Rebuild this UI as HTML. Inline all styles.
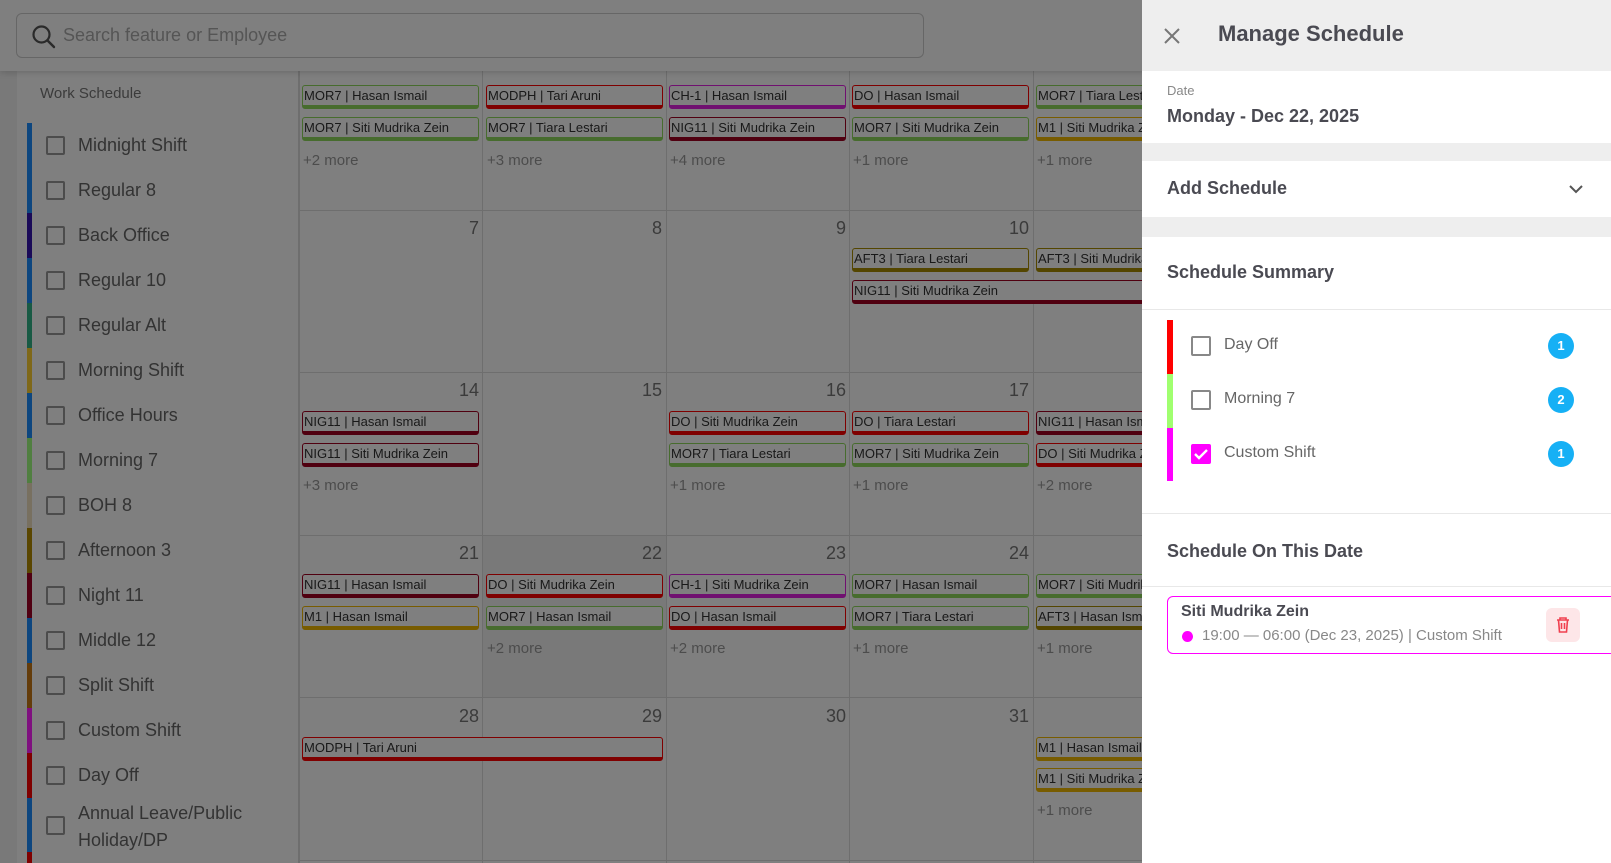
<!DOCTYPE html>
<html><head><meta charset="utf-8"><style>
*{box-sizing:border-box;margin:0;padding:0}
body{width:1611px;height:863px;overflow:hidden;position:relative;background:#f2f2f2;font-family:"Liberation Sans",sans-serif;color:#444}
.a{position:absolute}
.hdr{left:0;top:0;width:1611px;height:71px;background:#fff;box-shadow:0 2px 6px rgba(0,0,0,.15);z-index:2}
.search{left:16px;top:13px;width:908px;height:45px;border:1px solid #ccc;border-radius:6px;background:#fff}
.side{left:17px;top:71px;width:282px;height:792px;background:#fff;border-right:1px solid #ddd}
.bar{left:27px;width:5px;height:45px}
.cb{left:46px;width:19px;height:19px;border:2px solid #999;border-radius:2px}
.lb{left:78px;font-size:18px;color:#666}
.cal{left:300px;top:47px;width:1000px;height:816px;background:#fff}
.vl{width:1px;background:#ddd;top:47px;height:816px}
.hl{height:1px;background:#ddd;left:300px;width:1000px}
.dn{font-size:18px;color:#777;width:180px;text-align:right}
.c{position:absolute;height:24px;border:1px solid;border-bottom-width:4px;border-radius:3px;font-size:13px;line-height:19px;padding-left:1px;color:#333;white-space:nowrap;overflow:hidden;background:#fff}
.g{border-color:#8fd85c}.r{border-color:#ff0000}.n{border-color:#a00020}.m{border-color:#e020e0}.o{border-color:#a88c00}.y{border-color:#f0b800}
.more{font-size:15px;color:#999}
.ov{left:0;top:0;width:1142px;height:863px;background:rgba(0,0,0,.5);z-index:5}
.pn{left:1142px;top:0;width:469px;height:863px;background:#fff;z-index:6}
.sec{position:absolute;left:0;width:469px}
.badge{position:absolute;left:406px;width:26px;height:26px;border-radius:50%;background:#16b0f5;color:#fff;font-size:13px;font-weight:bold;text-align:center;line-height:26px}
</style></head><body>
<div class="a hdr"><div class="a search">
<svg class="a" style="left:14px;top:10px" width="26" height="26" viewBox="0 0 26 26"><circle cx="10.5" cy="10.5" r="8" fill="none" stroke="#555" stroke-width="2.2"/><line x1="16.5" y1="16.5" x2="23" y2="23" stroke="#555" stroke-width="2.4" stroke-linecap="round"/></svg>
<div class="a" style="left:46px;top:11px;font-size:18px;color:#aaa">Search feature or Employee</div></div></div>

<div class="a side"></div>
<div class="a" style="left:40px;top:85px;font-size:15px;color:#777">Work Schedule</div>
<div class="a bar" style="top:123px;background:#1a8cff"></div><div class="a cb" style="top:136px"></div><div class="a lb" style="top:135px">Midnight Shift</div>
<div class="a bar" style="top:168px;background:#1a8cff"></div><div class="a cb" style="top:181px"></div><div class="a lb" style="top:180px">Regular 8</div>
<div class="a bar" style="top:213px;background:#3414b0"></div><div class="a cb" style="top:226px"></div><div class="a lb" style="top:225px">Back Office</div>
<div class="a bar" style="top:258px;background:#1a8cff"></div><div class="a cb" style="top:271px"></div><div class="a lb" style="top:270px">Regular 10</div>
<div class="a bar" style="top:303px;background:#30b488"></div><div class="a cb" style="top:316px"></div><div class="a lb" style="top:315px">Regular Alt</div>
<div class="a bar" style="top:348px;background:#ffd030"></div><div class="a cb" style="top:361px"></div><div class="a lb" style="top:360px">Morning Shift</div>
<div class="a bar" style="top:393px;background:#1a8cff"></div><div class="a cb" style="top:406px"></div><div class="a lb" style="top:405px">Office Hours</div>
<div class="a bar" style="top:438px;background:#a0ff80"></div><div class="a cb" style="top:451px"></div><div class="a lb" style="top:450px">Morning 7</div>
<div class="a bar" style="top:483px;background:#f0e0c0"></div><div class="a cb" style="top:496px"></div><div class="a lb" style="top:495px">BOH 8</div>
<div class="a bar" style="top:528px;background:#b48c00"></div><div class="a cb" style="top:541px"></div><div class="a lb" style="top:540px">Afternoon 3</div>
<div class="a bar" style="top:573px;background:#a00024"></div><div class="a cb" style="top:586px"></div><div class="a lb" style="top:585px">Night 11</div>
<div class="a bar" style="top:618px;background:#1a8cff"></div><div class="a cb" style="top:631px"></div><div class="a lb" style="top:630px">Middle 12</div>
<div class="a bar" style="top:663px;background:#c87814"></div><div class="a cb" style="top:676px"></div><div class="a lb" style="top:675px">Split Shift</div>
<div class="a bar" style="top:708px;background:#ff20ff"></div><div class="a cb" style="top:721px"></div><div class="a lb" style="top:720px">Custom Shift</div>
<div class="a bar" style="top:753px;background:#ff0000"></div><div class="a cb" style="top:766px"></div><div class="a lb" style="top:765px">Day Off</div>
<div class="a bar" style="top:798px;height:54px;background:#1a8cff"></div><div class="a cb" style="top:816px"></div><div class="a lb" style="top:800px;line-height:27px">Annual Leave/Public<br>Holiday/DP</div>
<div class="a bar" style="top:852px;height:11px;background:#ff0000"></div>

<div class="a cal"></div>
<div class="a" style="left:483px;top:535px;width:183px;height:163px;background:#f3f3f3"></div>
<div class="a vl" style="left:299px"></div><div class="a vl" style="left:482px"></div><div class="a vl" style="left:666px"></div><div class="a vl" style="left:849px"></div><div class="a vl" style="left:1033px"></div>
<div class="a hl" style="top:210px"></div><div class="a hl" style="top:372px"></div><div class="a hl" style="top:535px"></div><div class="a hl" style="top:697px"></div><div class="a hl" style="top:860px"></div>

<div class="c g" style="left:302px;top:85px;width:177px">MOR7 | Hasan Ismail</div>
<div class="c g" style="left:302px;top:117px;width:177px">MOR7 | Siti Mudrika Zein</div>
<div class="a more" style="left:303px;top:152px">+2 more</div>
<div class="c r" style="left:486px;top:85px;width:177px">MODPH | Tari Aruni</div>
<div class="c g" style="left:486px;top:117px;width:177px">MOR7 | Tiara Lestari</div>
<div class="a more" style="left:487px;top:152px">+3 more</div>
<div class="c m" style="left:669px;top:85px;width:177px">CH-1 | Hasan Ismail</div>
<div class="c n" style="left:669px;top:117px;width:177px">NIG11 | Siti Mudrika Zein</div>
<div class="a more" style="left:670px;top:152px">+4 more</div>
<div class="c r" style="left:852px;top:85px;width:177px">DO | Hasan Ismail</div>
<div class="c g" style="left:852px;top:117px;width:177px">MOR7 | Siti Mudrika Zein</div>
<div class="a more" style="left:853px;top:152px">+1 more</div>
<div class="c g" style="left:1036px;top:85px;width:177px">MOR7 | Tiara Lestari</div>
<div class="c y" style="left:1036px;top:117px;width:177px">M1 | Siti Mudrika Zein</div>
<div class="a more" style="left:1037px;top:152px">+1 more</div>
<div class="a dn" style="left:299px;top:218px">7</div><div class="a dn" style="left:482px;top:218px">8</div><div class="a dn" style="left:666px;top:218px">9</div><div class="a dn" style="left:849px;top:218px">10</div>
<div class="c o" style="left:852px;top:248px;width:177px">AFT3 | Tiara Lestari</div>
<div class="c o" style="left:1036px;top:248px;width:177px">AFT3 | Siti Mudrika Zein</div>
<div class="c n" style="left:852px;top:280px;width:400px">NIG11 | Siti Mudrika Zein</div>
<div class="a dn" style="left:299px;top:380px">14</div><div class="a dn" style="left:482px;top:380px">15</div><div class="a dn" style="left:666px;top:380px">16</div><div class="a dn" style="left:849px;top:380px">17</div>
<div class="c n" style="left:302px;top:411px;width:177px">NIG11 | Hasan Ismail</div>
<div class="c n" style="left:302px;top:443px;width:177px">NIG11 | Siti Mudrika Zein</div>
<div class="a more" style="left:303px;top:477px">+3 more</div>
<div class="c r" style="left:669px;top:411px;width:177px">DO | Siti Mudrika Zein</div>
<div class="c g" style="left:669px;top:443px;width:177px">MOR7 | Tiara Lestari</div>
<div class="a more" style="left:670px;top:477px">+1 more</div>
<div class="c r" style="left:852px;top:411px;width:177px">DO | Tiara Lestari</div>
<div class="c g" style="left:852px;top:443px;width:177px">MOR7 | Siti Mudrika Zein</div>
<div class="a more" style="left:853px;top:477px">+1 more</div>
<div class="c n" style="left:1036px;top:411px;width:177px">NIG11 | Hasan Ismail</div>
<div class="c r" style="left:1036px;top:443px;width:177px">DO | Siti Mudrika Zein</div>
<div class="a more" style="left:1037px;top:477px">+2 more</div>
<div class="a dn" style="left:299px;top:543px">21</div><div class="a dn" style="left:482px;top:543px">22</div><div class="a dn" style="left:666px;top:543px">23</div><div class="a dn" style="left:849px;top:543px">24</div>
<div class="c n" style="left:302px;top:574px;width:177px">NIG11 | Hasan Ismail</div>
<div class="c y" style="left:302px;top:606px;width:177px">M1 | Hasan Ismail</div>
<div class="c r" style="left:486px;top:574px;width:177px">DO | Siti Mudrika Zein</div>
<div class="c g" style="left:486px;top:606px;width:177px">MOR7 | Hasan Ismail</div>
<div class="a more" style="left:487px;top:640px">+2 more</div>
<div class="c m" style="left:669px;top:574px;width:177px">CH-1 | Siti Mudrika Zein</div>
<div class="c r" style="left:669px;top:606px;width:177px">DO | Hasan Ismail</div>
<div class="a more" style="left:670px;top:640px">+2 more</div>
<div class="c g" style="left:852px;top:574px;width:177px">MOR7 | Hasan Ismail</div>
<div class="c g" style="left:852px;top:606px;width:177px">MOR7 | Tiara Lestari</div>
<div class="a more" style="left:853px;top:640px">+1 more</div>
<div class="c g" style="left:1036px;top:574px;width:177px">MOR7 | Siti Mudrika Zein</div>
<div class="c o" style="left:1036px;top:606px;width:177px">AFT3 | Hasan Ismail</div>
<div class="a more" style="left:1037px;top:640px">+1 more</div>
<div class="a dn" style="left:299px;top:706px">28</div><div class="a dn" style="left:482px;top:706px">29</div><div class="a dn" style="left:666px;top:706px">30</div><div class="a dn" style="left:849px;top:706px">31</div>
<div class="c r" style="left:302px;top:737px;width:361px">MODPH | Tari Aruni</div>
<div class="c y" style="left:1036px;top:737px;width:177px">M1 | Hasan Ismail</div>
<div class="c y" style="left:1036px;top:768px;width:177px">M1 | Siti Mudrika Zein</div>
<div class="a more" style="left:1037px;top:802px">+1 more</div>

<div class="a ov"></div>

<div class="a pn">
<div class="sec" style="top:0;height:71px;background:#eee"></div>
<svg class="a" style="left:21px;top:27px" width="18" height="18" viewBox="0 0 18 18"><path d="M2 2L16 16M16 2L2 16" stroke="#777" stroke-width="2"/></svg>
<div class="a" style="left:76px;top:21px;font-size:22px;font-weight:bold;color:#4a4a52">Manage Schedule</div>
<div class="a" style="left:25px;top:83px;font-size:13px;color:#888">Date</div>
<div class="a" style="left:25px;top:106px;font-size:18px;font-weight:bold;color:#4a4a52">Monday - Dec 22, 2025</div>
<div class="sec" style="top:143px;height:18px;background:#eee"></div>
<div class="a" style="left:25px;top:178px;font-size:18px;font-weight:bold;color:#4a4a52">Add Schedule</div>
<svg class="a" style="left:426px;top:183px" width="16" height="12" viewBox="0 0 16 12"><path d="M2 3L8 9L14 3" fill="none" stroke="#555" stroke-width="2"/></svg>
<div class="sec" style="top:217px;height:20px;background:#eee"></div>
<div class="a" style="left:25px;top:262px;font-size:18px;font-weight:bold;color:#4a4a52">Schedule Summary</div>
<div class="sec" style="top:309px;height:1px;background:#e8e8e8"></div>
<div class="a" style="left:25px;top:320px;width:6px;height:54px;background:#ff0000"></div>
<div class="a" style="left:25px;top:374px;width:6px;height:54px;background:#a0ff70"></div>
<div class="a" style="left:25px;top:428px;width:6px;height:53px;background:#ff00ff"></div>
<div class="a" style="left:49px;top:336px;width:20px;height:20px;border:2px solid #888;border-radius:2px"></div>
<div class="a" style="left:49px;top:390px;width:20px;height:20px;border:2px solid #888;border-radius:2px"></div>
<div class="a" style="left:49px;top:444px;width:20px;height:20px;background:#ff00ff;border-radius:2px"><svg width="20" height="20" viewBox="0 0 20 20"><path d="M4 10L8 14L16 6" fill="none" stroke="#fff" stroke-width="2.4"/></svg></div>
<div class="a" style="left:82px;top:336px;font-size:16px;color:#666">Day Off</div>
<div class="a" style="left:82px;top:390px;font-size:16px;color:#666">Morning 7</div>
<div class="a" style="left:82px;top:444px;font-size:16px;color:#666">Custom Shift</div>
<div class="badge" style="top:333px">1</div><div class="badge" style="top:387px">2</div><div class="badge" style="top:441px">1</div>
<div class="sec" style="top:513px;height:1px;background:#e8e8e8"></div>
<div class="a" style="left:25px;top:541px;font-size:18px;font-weight:bold;color:#4a4a52">Schedule On This Date</div>
<div class="sec" style="top:586px;height:1px;background:#e8e8e8"></div>
<div class="a" style="left:25px;top:596px;width:460px;height:58px;border:1.5px solid #ff00ff;border-radius:6px"></div>
<div class="a" style="left:39px;top:603px;font-size:16px;font-weight:bold;color:#4a4a52">Siti Mudrika Zein</div>
<div class="a" style="left:40px;top:631px;width:11px;height:11px;border-radius:50%;background:#ff00ff"></div>
<div class="a" style="left:60px;top:627px;font-size:15px;color:#888">19:00 — 06:00 (Dec 23, 2025) | Custom Shift</div>
<div class="a" style="left:404px;top:608px;width:34px;height:34px;border-radius:6px;background:#fde6e8"><svg width="34" height="34" viewBox="0 0 34 34"><path d="M11 12H23M14 12V10H20V12M12.5 12L13.5 24H20.5L21.5 12M15.5 15V21M18.5 15V21" fill="none" stroke="#f04050" stroke-width="1.6"/></svg></div>
</div>
</body></html>
